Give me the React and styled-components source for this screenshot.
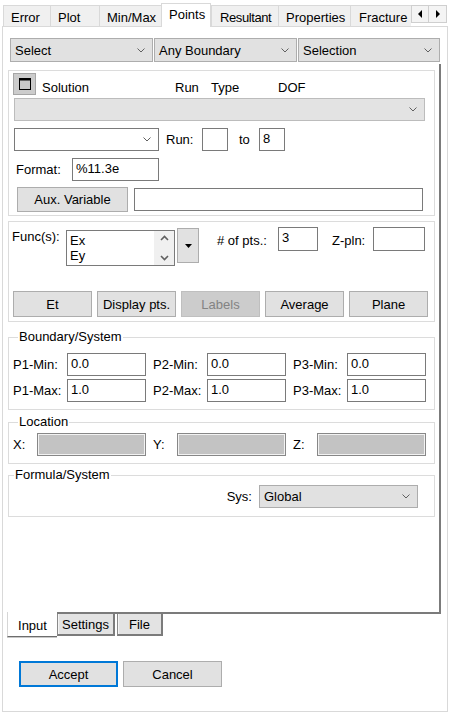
import React from 'react'
import styled, { createGlobalStyle } from 'styled-components'

const GlobalStyle = createGlobalStyle`
  html, body {
    margin: 0;
    padding: 0;
    background: #fff;
  }
  body {
    font-family: "Liberation Sans", Arial, sans-serif;
    font-size: 13px;
    color: #000;
  }
`

const Window = styled.div`
  width: 455px;
  height: 717px;
  background: #fff;
  overflow: hidden;
`

const TabStrip = styled.div`
  display: flex;
  align-items: flex-end;
  height: 26px;
  padding-left: 3px;
`

const TopTab = styled.div`
  box-sizing: border-box;
  position: relative;
  z-index: ${p => (p.$active ? 2 : 1)};
  width: ${p => p.$w}px;
  height: ${p => (p.$active ? 24 : 21)}px;
  margin-bottom: ${p => (p.$active ? -1 : 0)}px;
  padding: ${p => (p.$active ? 3 : 4)}px 0 0 ${p => p.$pl || 7}px;
  line-height: 15px;
  letter-spacing: ${p => p.$ls || 0}px;
  white-space: nowrap;
  overflow: hidden;
  background: ${p => (p.$active ? '#fff' : '#f0f0f0')};
  border: 1px solid #d9d9d9;
  border-bottom: none;
  border-right: ${p => (p.$active ? '1px solid #d9d9d9' : 'none')};
`

const ScrollArrows = styled.div`
  display: flex;
  align-self: flex-start;
  margin-top: 5px;
  height: 18px;
`

const ArrowCell = styled.div`
  box-sizing: border-box;
  width: 18px;
  height: 18px;
  display: flex;
  align-items: center;
  justify-content: center;
  background: #f4f4f4;
  border: 1px solid #cfcfcf;
  border-left: ${p => (p.$first ? '1px solid #cfcfcf' : 'none')};
`

const OuterPanel = styled.div`
  box-sizing: border-box;
  margin-left: 2px;
  width: 446px;
  height: 686px;
  border: 1px solid #d9d9d9;
`

const SelectRow = styled.div`
  display: flex;
  gap: 1px;
  margin: 11px 0 0 7px;
`

const Combo = styled.div`
  box-sizing: border-box;
  display: flex;
  align-items: center;
  justify-content: space-between;
  width: ${p => p.$w}px;
  height: ${p => p.$h || 24}px;
  margin-left: ${p => p.$ml || 0}px;
  padding: 0 7px 0 4px;
  white-space: nowrap;
  background: ${p => (p.$white ? '#fff' : p.$disabled ? '#e3e3e3' : '#e1e1e1')};
  border: 1px solid ${p => (p.$white ? '#7a7a7a' : p.$disabled ? '#bcbcbc' : '#adadad')};
`

const InnerPanel = styled.div`
  box-sizing: border-box;
  margin: 2px 0 0 4px;
  width: 434px;
  height: 550px;
  padding-top: 6px;
  border-right: 2px solid #7b7b7b;
  border-bottom: 2px solid #7b7b7b;
`

const GroupBox = styled.div`
  box-sizing: border-box;
  margin: ${p => p.$mt || 0}px 0 0 1px;
  width: 427px;
  padding: ${p => p.$pt || 0}px ${p => p.$pr || 0}px ${p => p.$pb || 0}px ${p => p.$pl || 0}px;
  border: 1px solid #dcdcdc;
`

const GroupTitle = styled.div`
  width: fit-content;
  margin: -8px 0 0 ${p => p.$ml || 5}px;
  padding: 0 1px;
  line-height: 14px;
  background: #fff;
`

const Row = styled.div`
  display: flex;
  align-items: ${p => p.$align || 'center'};
  margin-top: ${p => p.$mt || 0}px;
  margin-left: ${p => p.$ml || 0}px;
  justify-content: ${p => p.$justify || 'flex-start'};
  gap: ${p => p.$gap || 0}px;
`

const Label = styled.span`
  display: inline-block;
  width: ${p => (p.$w ? `${p.$w}px` : 'auto')};
  margin-left: ${p => p.$ml || 0}px;
  margin-top: ${p => p.$mt || 0}px;
  line-height: 15px;
  white-space: nowrap;
`

const TextBox = styled.div`
  box-sizing: border-box;
  width: ${p => p.$w}px;
  height: ${p => p.$h || 23}px;
  margin-left: ${p => p.$ml || 0}px;
  margin-top: ${p => p.$mt || 0}px;
  padding: 0 3px;
  line-height: ${p => (p.$h ? p.$h - 4 : 19)}px;
  background: #fff;
  border: 1px solid #7a7a7a;
`

const ReadOnlyField = styled.div`
  box-sizing: border-box;
  width: 109px;
  height: 23px;
  background: #c3c3c3;
  border: 1px solid #878787;
  box-shadow: inset 0 0 0 1px #f2f2f2;
`

const Button = styled.div`
  box-sizing: border-box;
  display: flex;
  align-items: center;
  justify-content: center;
  width: ${p => p.$w}px;
  height: ${p => p.$h || 26}px;
  margin-left: ${p => p.$ml || 0}px;
  background: ${p => (p.$disabled ? '#cccccc' : '#e1e1e1')};
  color: ${p => (p.$disabled ? '#838383' : '#000')};
  border: ${p => (p.$default ? '2px solid #0078d7' : p.$disabled ? '1px solid #bfbfbf' : '1px solid #adadad')};
  white-space: nowrap;
`

const ToggleButton = styled.div`
  box-sizing: border-box;
  display: flex;
  align-items: center;
  justify-content: center;
  width: 23px;
  height: 22px;
  margin-left: 4px;
  background: #cccccc;
  border: 1px solid #a6a6a6;
`

const ListBox = styled.div`
  box-sizing: border-box;
  display: flex;
  width: 109px;
  height: 36px;
  margin-top: 8px;
  background: #fff;
  border: 1px solid #7a7a7a;
`

const ListItems = styled.div`
  flex: 1;
  padding: 2px 0 0 3px;
  line-height: 15px;
`

const ScrollBar = styled.div`
  width: 20px;
  display: flex;
  flex-direction: column;
  align-items: center;
  justify-content: space-between;
  padding: 4px 0;
  background: #f0f0f0;
`

const DropButton = styled.div`
  box-sizing: border-box;
  display: flex;
  align-items: center;
  justify-content: center;
  width: 22px;
  height: 35px;
  margin: 6px 0 0 2px;
  background: #e1e1e1;
  border: 1px solid #adadad;
`

const Cells = styled.div`
  display: flex;
  gap: 7px;
`

const Cell = styled.div`
  display: flex;
  align-items: center;
`

const BottomTabs = styled.div`
  display: flex;
  margin-left: 4px;
`

const BottomTab = styled.div`
  box-sizing: border-box;
  position: relative;
  z-index: ${p => (p.$active ? 2 : 1)};
  width: ${p => p.$w}px;
  height: ${p => (p.$active ? 25 : 22)}px;
  margin-top: ${p => (p.$active ? -2 : 0)}px;
  margin-left: ${p => p.$ml || 0}px;
  padding-top: ${p => (p.$active ? 6 : 3)}px;
  text-align: center;
  line-height: 15px;
  background: ${p => (p.$active ? '#fff' : '#e3e3e3')};
  border-left: 1px solid ${p => (p.$active ? '#d6d6d6' : '#8a8a8a')};
  border-right: ${p => (p.$active ? 'none' : '2px solid #7b7b7b')};
  border-bottom: ${p => (p.$active ? '1px solid #6d6d6d' : '2px solid #7b7b7b')};
  box-shadow: ${p => (p.$active ? '0 1px 0 #c8c8c8' : 'inset 1px 0 0 #f4f4f4')};
`

const DialogButtons = styled.div`
  display: flex;
  gap: 5px;
  margin: 24px 0 0 16px;
`

const Chevron = () => (
  <svg width="8" height="5" viewBox="0 0 8 5">
    <path d="M0.5 0.5 L4 4 L7.5 0.5" fill="none" stroke="#606060" strokeWidth="1" />
  </svg>
)

const SmallChevron = ({ up }) => (
  <svg width="9" height="6" viewBox="0 0 9 6">
    <path d={up ? 'M1 5 L4.5 1.5 L8 5' : 'M1 1 L4.5 4.5 L8 1'} fill="none" stroke="#606060" strokeWidth="1.6" />
  </svg>
)

const Triangle = ({ dir }) => {
  const d = dir === 'left' ? 'M4 0 L4 8 L0 4 Z' : dir === 'right' ? 'M0 0 L0 8 L4 4 Z' : 'M0 0 L7 0 L3.5 4 Z'
  const w = dir === 'down' ? 7 : 4
  const h = dir === 'down' ? 4 : 8
  return (
    <svg width={w} height={h} viewBox={`0 0 ${w} ${h}`}>
      <path d={d} fill="#000" />
    </svg>
  )
}

const WindowIcon = () => (
  <svg width="12" height="12" viewBox="0 0 12 12">
    <rect x="0.5" y="0.5" width="11" height="11" fill="#c8c8c8" stroke="#000" strokeWidth="1" />
    <rect x="0" y="0" width="12" height="2.5" fill="#000" />
  </svg>
)

const topTabs = [
  { name: 'Error', w: 47 },
  { name: 'Plot', w: 49 },
  { name: 'Min/Max', w: 62 },
  { name: 'Points', w: 50, active: true },
  { name: 'Resultant', w: 67, pl: 8, ls: -0.4 },
  { name: 'Properties', w: 72 },
  { name: 'Fracture', w: 61, pl: 8 },
]

const bounds = [
  [['P1-Min:', '0.0'], ['P2-Min:', '0.0'], ['P3-Min:', '0.0']],
  [['P1-Max:', '1.0'], ['P2-Max:', '1.0'], ['P3-Max:', '1.0']],
]

const actions = ['Et', 'Display pts.', 'Labels', 'Average', 'Plane']

export default function App() {
  return (
    <Window>
      <GlobalStyle />
      <TabStrip>
        {topTabs.map(t => (
          <TopTab key={t.name} $w={t.w} $active={t.active} $pl={t.pl} $ls={t.ls}>
            {t.name}
          </TopTab>
        ))}
        <ScrollArrows>
          <ArrowCell $first><Triangle dir="left" /></ArrowCell>
          <ArrowCell><Triangle dir="right" /></ArrowCell>
        </ScrollArrows>
      </TabStrip>

      <OuterPanel>
        <SelectRow>
          <Combo $w={143}>Select<Chevron /></Combo>
          <Combo $w={143}>Any Boundary<Chevron /></Combo>
          <Combo $w={142}>Selection<Chevron /></Combo>
        </SelectRow>

        <InnerPanel>
          <GroupBox $pb={3}>
            <Row $align="flex-end" $mt={2}>
              <ToggleButton><WindowIcon /></ToggleButton>
              <Label $w={133} $ml={6}>Solution</Label>
              <Label $w={36}>Run</Label>
              <Label $w={67}>Type</Label>
              <Label>DOF</Label>
            </Row>
            <Row $mt={3}>
              <Combo $w={411} $h={23} $ml={5} $disabled><span /><Chevron /></Combo>
            </Row>
            <Row $mt={7}>
              <Combo $w={145} $h={23} $ml={5} $white><span /><Chevron /></Combo>
              <Label $w={36} $ml={7}>Run:</Label>
              <TextBox $w={26} />
              <Label $w={20} $ml={11}>to</Label>
              <TextBox $w={26}>8</TextBox>
            </Row>
            <Row $mt={7}>
              <Label $w={56} $ml={7}>Format:</Label>
              <TextBox $w={87}>%11.3e</TextBox>
            </Row>
            <Row $mt={6}>
              <Button $w={111} $h={25} $ml={8}>Aux. Variable</Button>
              <TextBox $w={289} $ml={6} />
            </Row>
          </GroupBox>

          <GroupBox $mt={5} $pb={4}>
            <Row $align="flex-start">
              <Label $w={54} $ml={3} $mt={7}>Func(s):</Label>
              <ListBox>
                <ListItems>Ex<br />Ey</ListItems>
                <ScrollBar>
                  <SmallChevron up />
                  <SmallChevron />
                </ScrollBar>
              </ListBox>
              <DropButton><Triangle dir="down" /></DropButton>
              <Label $w={61} $ml={18} $mt={11}>
                # of pts.:
              </Label>
              <TextBox $w={40} $h={24} $mt={5}>3</TextBox>
              <Label $w={41} $ml={14} $mt={11}>Z-pln:</Label>
              <TextBox $w={52} $h={24} $mt={5} />
            </Row>
            <Row $mt={25} $ml={4} $gap={5}>
              {actions.map(a => (
                <Button key={a} $w={79} $disabled={a === 'Labels'}>{a}</Button>
              ))}
            </Row>
          </GroupBox>

          <GroupBox $mt={15} $pl={4} $pb={7}>
            <GroupTitle>Boundary/System</GroupTitle>
            {bounds.map((row, i) => (
              <Row key={i} $mt={i === 0 ? 9 : 3}>
                <Cells>
                  {row.map(([label, value]) => (
                    <Cell key={label}>
                      <Label $w={54}>{label}</Label>
                      <TextBox $w={79}>{value}</TextBox>
                    </Cell>
                  ))}
                </Cells>
              </Row>
            ))}
          </GroupBox>

          <GroupBox $mt={12} $pl={4} $pb={7}>
            <GroupTitle>Location</GroupTitle>
            <Row $mt={4}>
              <Cells>
                {['X:', 'Y:', 'Z:'].map(l => (
                  <Cell key={l}>
                    <Label $w={24}>{l}</Label>
                    <ReadOnlyField />
                  </Cell>
                ))}
              </Cells>
            </Row>
          </GroupBox>

          <GroupBox $mt={11} $pr={16} $pb={8}>
            <GroupTitle>Formula/System</GroupTitle>
            <Row $mt={3} $justify="flex-end" $gap={7}>
              <Label>Sys:</Label>
              <Combo $w={159} $h={23}>Global<Chevron /></Combo>
            </Row>
          </GroupBox>
        </InnerPanel>

        <BottomTabs>
          <BottomTab $w={50} $active>Input</BottomTab>
          <BottomTab $w={58}>Settings</BottomTab>
          <BottomTab $w={46} $ml={2}>File</BottomTab>
        </BottomTabs>

        <DialogButtons>
          <Button $w={99} $default>Accept</Button>
          <Button $w={99}>Cancel</Button>
        </DialogButtons>
      </OuterPanel>
    </Window>
  )
}
